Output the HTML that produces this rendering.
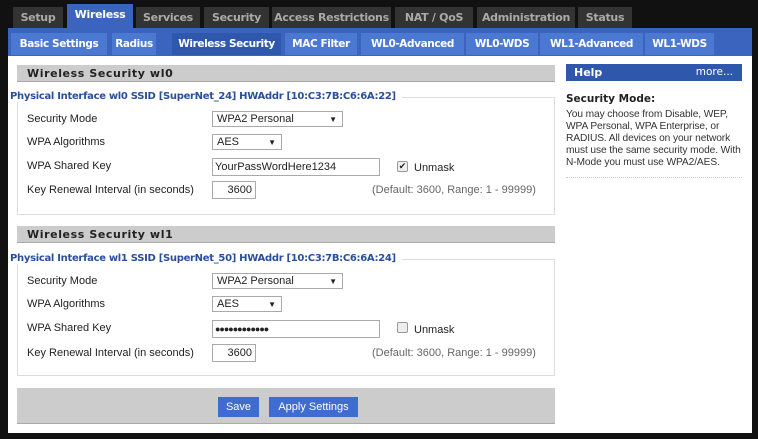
<!DOCTYPE html>
<html><head><style>
*{margin:0;padding:0;box-sizing:border-box}
body{width:758px;height:439px;background:#111;position:relative;overflow:hidden;font-family:"Liberation Sans",sans-serif;font-size:11px;color:#222}
.a{position:absolute}
.t{position:absolute;top:7px;height:21px;background:#333;color:#aaa;font-weight:bold;font-size:11px;text-align:center;line-height:21px;font-family:"DejaVu Sans",sans-serif;letter-spacing:-0.3px}
.s{position:absolute;top:33px;height:22px;background:#4b78d0;color:#fff;font-weight:bold;font-size:10.5px;text-align:center;line-height:22px;font-family:"DejaVu Sans",sans-serif;letter-spacing:-0.4px}
.hd{position:absolute;left:17px;width:538px;height:17px;background:#ccc;font-weight:bold;font-family:"DejaVu Sans",sans-serif;font-size:11px;line-height:17px;padding-left:10px;border-bottom:1px solid #aaa;letter-spacing:0.6px}
.bl{position:absolute;left:10px;color:#2a4f9a;font-weight:bold;font-family:"DejaVu Sans",sans-serif;font-size:10px;letter-spacing:-0.3px;background:#fff;padding-right:6px}
.fs{position:absolute;left:17px;width:538px;border:1px solid #ddd}
.l{position:absolute;left:27px;font-size:11px}
.in{position:absolute;left:212px;border:1px solid #aaa;background:#fff;font-size:11px;padding-left:4px;line-height:15px}
.ar{position:absolute;right:5px;top:0;font-size:8px}
.cb{position:absolute;width:11px;height:11px;border:1px solid #999;background:#eee;border-radius:2px;font-size:9px;line-height:9px;text-align:center}
.g{position:absolute;left:372px;color:#666;font-size:11px}
</style></head><body>
<div class="a" style="left:8px;top:28px;width:744px;height:405px;background:#fff"></div>
<div class="t" style="left:13px;width:50px">Setup</div>
<div class="t" style="left:67px;width:66px;top:4px;height:24px;background:#3a64bd;color:#fff">Wireless</div>
<div class="t" style="left:136px;width:64px">Services</div>
<div class="t" style="left:204px;width:65px">Security</div>
<div class="t" style="left:272px;width:119px">Access Restrictions</div>
<div class="t" style="left:395px;width:78px">NAT / QoS</div>
<div class="t" style="left:477px;width:98px">Administration</div>
<div class="t" style="left:578px;width:54px">Status</div>
<div class="a" style="left:8px;top:28px;width:744px;height:28px;background:#3a64bd"></div>
<div class="s" style="left:11px;width:96px">Basic Settings</div>
<div class="s" style="left:112px;width:44px">Radius</div>
<div class="s" style="left:172px;width:109px;background:#2f58ad">Wireless Security</div>
<div class="s" style="left:285px;width:72px">MAC Filter</div>
<div class="s" style="left:361px;width:103px">WL0-Advanced</div>
<div class="s" style="left:466px;width:72px">WL0-WDS</div>
<div class="s" style="left:540px;width:103px">WL1-Advanced</div>
<div class="s" style="left:645px;width:69px">WL1-WDS</div>

<div class="hd" style="top:65px">Wireless Security wl0</div>
<div class="fs" style="top:97px;height:118px"></div>
<div class="bl" style="top:91px">Physical Interface wl0 SSID [SuperNet_24] HWAddr [10:C3:7B:C6:6A:22]</div>
<div class="l" style="top:113px">Security Mode</div>
<div class="l" style="top:136px">WPA Algorithms</div>
<div class="l" style="top:160px">WPA Shared Key</div>
<div class="l" style="top:184px">Key Renewal Interval (in seconds)</div>
<div class="in" style="top:111px;width:131px;height:16px">WPA2 Personal<span class="ar">▼</span></div>
<div class="in" style="top:134px;width:70px;height:16px">AES<span class="ar">▼</span></div>
<div class="in" style="top:158px;width:168px;height:18px;line-height:17px;padding-left:2px">YourPassWordHere1234</div>
<div class="in" style="top:181px;width:44px;height:18px;line-height:17px;text-align:right;padding-right:3px">3600</div>
<div class="cb" style="left:397px;top:161px">✔</div>
<div class="a" style="left:414px;top:162px">Unmask</div>
<div class="g" style="top:184px">(Default: 3600, Range: 1 - 99999)</div>

<div class="hd" style="top:226px">Wireless Security wl1</div>
<div class="fs" style="top:259px;height:117px"></div>
<div class="bl" style="top:253px">Physical Interface wl1 SSID [SuperNet_50] HWAddr [10:C3:7B:C6:6A:24]</div>
<div class="l" style="top:275px">Security Mode</div>
<div class="l" style="top:298px">WPA Algorithms</div>
<div class="l" style="top:322px">WPA Shared Key</div>
<div class="l" style="top:347px">Key Renewal Interval (in seconds)</div>
<div class="in" style="top:273px;width:131px;height:16px">WPA2 Personal<span class="ar">▼</span></div>
<div class="in" style="top:296px;width:70px;height:16px">AES<span class="ar">▼</span></div>
<div class="in" style="top:320px;width:168px;height:18px;line-height:17px;padding-left:2px;font-size:9px;letter-spacing:-1px">●●●●●●●●●●●●</div>
<div class="in" style="top:344px;width:44px;height:18px;line-height:17px;text-align:right;padding-right:3px">3600</div>
<div class="cb" style="left:397px;top:322px"></div>
<div class="a" style="left:414px;top:324px">Unmask</div>
<div class="g" style="top:347px">(Default: 3600, Range: 1 - 99999)</div>

<div class="a" style="left:17px;top:388px;width:538px;height:36px;background:#ccc;border-bottom:1px solid #aaa"></div>
<div class="a" style="left:218px;top:397px;width:41px;height:20px;background:#3e6cd0;color:#fff;text-align:center;line-height:20px;font-size:11px">Save</div>
<div class="a" style="left:269px;top:397px;width:89px;height:20px;background:#3e6cd0;color:#fff;text-align:center;line-height:20px;font-size:11px">Apply Settings</div>

<div class="a" style="left:566px;top:64px;width:176px;height:17px;background:#2f58ad;color:#fff;font-weight:bold;font-family:'DejaVu Sans',sans-serif;font-size:11px;line-height:17px;padding-left:8px">Help<span style="position:absolute;right:9px;font-weight:normal;font-size:10.5px">more...</span></div>
<div class="a" style="left:566px;top:93px;font-weight:bold;font-family:'DejaVu Sans',sans-serif;font-size:10.5px">Security Mode:</div>
<div class="a" style="left:566px;top:109px;width:180px;font-size:10.2px;line-height:12px;color:#333;letter-spacing:-0.1px">You may choose from Disable, WEP, WPA Personal, WPA Enterprise, or RADIUS. All devices on your network must use the same security mode. With N-Mode you must use WPA2/AES.</div>
<div class="a" style="left:566px;top:177px;width:176px;border-top:1px dotted #ccc"></div>
</body></html>
